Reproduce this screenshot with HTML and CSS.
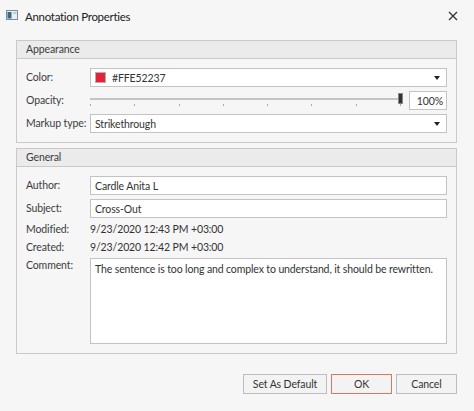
FILE: index.html
```html
<!DOCTYPE html>
<html lang="en">
<head>
  <meta charset="UTF-8">
  <title>Annotation Properties</title>
  <link rel="stylesheet" href="styles.css">
</head>
<body>
  <div class="dialog">
    <div class="titlebar">
      <svg class="app-icon" width="12" height="10" viewBox="0 0 12 10">
        <rect x="0.5" y="0.5" width="11" height="9" fill="#e8eef3" stroke="#7f8b95"/>
        <rect x="1.5" y="2" width="4" height="6.5" fill="#2e6b8f"/>
        <rect x="7" y="2.5" width="3.5" height="1" fill="#9aa6b0"/>
      </svg>
      <span class="title">Annotation Properties</span>
      <svg class="close" width="10" height="10" viewBox="0 0 10 10">
        <path d="M1 1 L9 9 M9 1 L1 9" stroke="#333" stroke-width="1.3"/>
      </svg>
    </div>

    <div class="content">
      <div class="group">
        <div class="group-header">Appearance</div>
        <div class="group-body">
          <label>Color:</label>
          <div class="field combo">
            <span class="swatch"></span>
            <span>#FFE52237</span>
            <span class="arrow"></span>
          </div>

          <label>Opacity:</label>
          <div class="slider-row">
            <div class="slider">
              <div class="track"></div>
              <div class="thumb"></div>
              <div class="ticks">
                <i></i><i></i><i></i><i></i><i></i><i></i><i></i><i></i>
              </div>
            </div>
            <div class="field percent">100%</div>
          </div>

          <label>Markup type:</label>
          <div class="field combo">
            <span>Strikethrough</span>
            <span class="arrow"></span>
          </div>
        </div>
      </div>

      <div class="group">
        <div class="group-header">General</div>
        <div class="group-body">
          <label>Author:</label>
          <div class="field">Cardle Anita L</div>

          <label>Subject:</label>
          <div class="field">Cross-Out</div>

          <label class="plain">Modified:</label>
          <div class="value">9/23/2020 12:43 PM +03:00</div>

          <label class="plain">Created:</label>
          <div class="value">9/23/2020 12:42 PM +03:00</div>

          <label class="top">Comment:</label>
          <div class="field memo">The sentence is too long and complex to understand, it should be rewritten.</div>
        </div>
      </div>
    </div>

    <div class="buttons">
      <button class="btn wide">Set As Default</button>
      <button class="btn ok">OK</button>
      <button class="btn">Cancel</button>
    </div>
  </div>
</body>
</html>
```

FILE: styles.css
```css
body {
  margin: 0;
  font-family: Lato, "Open Sans", sans-serif;
  font-size: 10.5px;
  letter-spacing: -0.12px;
  color: #3c3c3c;
  background-color: #f6f6f6;
}

.dialog {
  width: 474px;
  height: 411px;
  display: flex;
  flex-direction: column;
}

.titlebar {
  height: 32px;
  display: flex;
  align-items: center;
  padding: 0 0 0 6px;
  box-sizing: border-box;
}

.app-icon {
  margin-right: 7px;
  margin-top: -2px;
}

.title {
  font-size: 11.5px;
  letter-spacing: -0.3px;
  color: #222;
  flex: 1;
}

.close {
  margin-right: 16px;
}

.content {
  padding: 8px 17px 0 16px;
  display: flex;
  flex-direction: column;
  gap: 5px;
}

.group {
  border: 1px solid #c9c9c9;
}

.group-header {
  height: 17px;
  line-height: 17px;
  padding-left: 9px;
  background-color: #ebebeb;
  border-bottom: 1px solid #c9c9c9;
}

.group-body {
  display: grid;
  grid-template-columns: 64px minmax(0, 1fr);
  row-gap: 4px;
  padding: 9px;
  align-items: center;
}

.group-body label {
  line-height: 19px;
  white-space: nowrap;
}

.group-body label.plain {
  line-height: 14px;
}

.group-body label.top {
  align-self: start;
  line-height: 14px;
}

.field {
  height: 19px;
  box-sizing: border-box;
  border: 1px solid #c3c3c3;
  background: white;
  display: flex;
  align-items: center;
  padding: 0 4px;
  color: #333;
  white-space: nowrap;
  overflow: hidden;
}

.combo .arrow {
  margin-left: auto;
  margin-right: 2px;
  width: 0;
  height: 0;
  border-left: 3.5px solid transparent;
  border-right: 3.5px solid transparent;
  border-top: 4px solid #222;
}

.swatch {
  width: 11px;
  height: 11px;
  background-color: #e52237;
  border: 1px solid #b0b0b0;
  box-sizing: border-box;
  margin-right: 6px;
}

.value {
  line-height: 14px;
  color: #333;
}

.memo {
  height: 86px;
  align-items: flex-start;
  padding: 3px 4px;
  line-height: 14px;
  white-space: normal;
}

.slider-row {
  display: flex;
  align-items: center;
  gap: 6px;
  height: 19px;
}

.slider {
  flex: 1;
  position: relative;
  height: 19px;
}

.track {
  position: absolute;
  left: 0;
  right: 0;
  top: 7px;
  height: 2px;
  background: #c4c4c4;
}

.thumb {
  position: absolute;
  right: 0;
  top: 2px;
  width: 5px;
  height: 11px;
  background: #333;
  border: 1px solid #888;
  box-sizing: border-box;
}

.ticks {
  position: absolute;
  left: 0;
  right: 2px;
  top: 13px;
  display: flex;
  justify-content: space-between;
}

.ticks i {
  width: 1px;
  height: 2px;
  background: #aaa;
}

.percent {
  width: 38px;
  justify-content: flex-end;
  padding-right: 3px;
}

.buttons {
  margin-top: auto;
  padding: 0 17px 17px 0;
  display: flex;
  justify-content: flex-end;
  gap: 4px;
}

.btn {
  height: 20px;
  width: 61px;
  font-family: inherit;
  font-size: 10.5px;
  letter-spacing: -0.12px;
  color: #333;
  background: #f3f3f3;
  border: 1px solid #bdbdbd;
  padding: 0;
}

.btn.wide {
  width: 84px;
}

.btn.ok {
  border-color: #d9775f;
}
```
